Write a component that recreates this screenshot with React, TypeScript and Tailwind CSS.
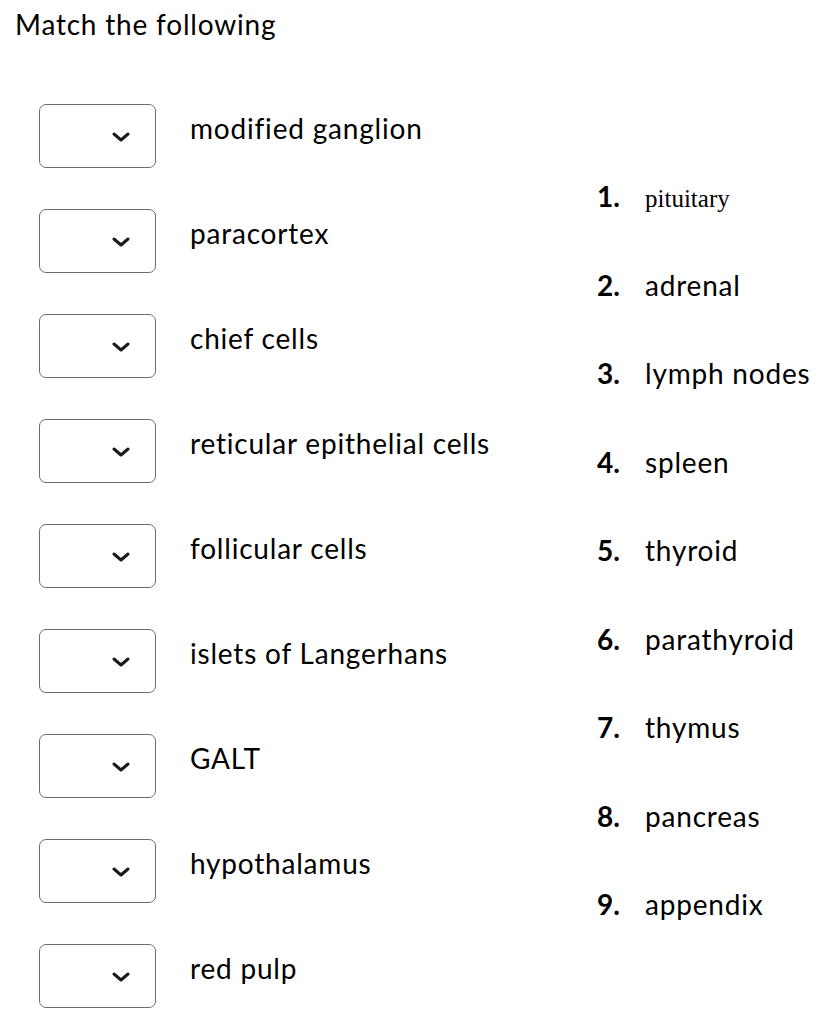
import { useState } from "react";

const terms = [
  "modified ganglion",
  "paracortex",
  "chief cells",
  "reticular epithelial cells",
  "follicular cells",
  "islets of Langerhans",
  "GALT",
  "hypothalamus",
  "red pulp",
];

const organs = [
  "pituitary",
  "adrenal",
  "lymph nodes",
  "spleen",
  "thyroid",
  "parathyroid",
  "thymus",
  "pancreas",
  "appendix",
];

function Chevron() {
  return (
    <svg width="18" height="10" viewBox="0 0 18 10" fill="none" className="pointer-events-none">
      <path d="M2 2l7 6 7-6" stroke="#1a1a1a" strokeWidth="3" strokeLinecap="round" strokeLinejoin="round" />
    </svg>
  );
}

function MatchSelect({ value, onChange }: { value: string; onChange: (v: string) => void }) {
  return (
    <div className="relative w-[117px] h-[64px] shrink-0">
      <select
        value={value}
        onChange={(e) => onChange(e.target.value)}
        className="appearance-none w-full h-full rounded-[7px] border border-[#6c6c6c] bg-white pl-3 text-[24px] text-black outline-none"
      >
        <option value=""></option>
        {organs.map((_, i) => (
          <option key={i} value={String(i + 1)}>
            {i + 1}
          </option>
        ))}
      </select>
      <span className="absolute right-[26px] top-[28px]">
        <Chevron />
      </span>
    </div>
  );
}

export default function App() {
  const [answers, setAnswers] = useState<string[]>(terms.map(() => ""));

  return (
    <div className="min-h-screen bg-white text-black font-['Lato','Liberation_Sans',sans-serif]">
      <h1 className="pl-[15px] pt-[6px] text-[28px] leading-[36px] tracking-[0.8px] font-normal">Match the following</h1>

      <div className="flex mt-[62px]">
        <div className="flex flex-col gap-[41px] pl-[39px] w-[560px]">
          {terms.map((term, i) => (
            <div key={term} className="flex items-start gap-[34px]">
              <MatchSelect
                value={answers[i]}
                onChange={(v) => setAnswers((a) => a.map((x, j) => (j === i ? v : x)))}
              />
              <span className="mt-[8px] text-[28px] leading-[32px] tracking-[0.8px]">{term}</span>
            </div>
          ))}
        </div>

        <ol className="flex flex-col pt-[76px] pl-[37px]">
          {organs.map((organ, i) => (
            <li key={organ} className="flex items-baseline h-[88.5px]">
              <span className="w-[48px] text-[28px] leading-[32px] font-bold">{i + 1}.</span>
              {i === 0 ? (
                <span className="text-[25px] leading-[32px] font-['Liberation_Serif',serif]">{organ}</span>
              ) : (
                <span className="text-[28px] leading-[32px] tracking-[0.8px]">{organ}</span>
              )}
            </li>
          ))}
        </ol>
      </div>
    </div>
  );
}
